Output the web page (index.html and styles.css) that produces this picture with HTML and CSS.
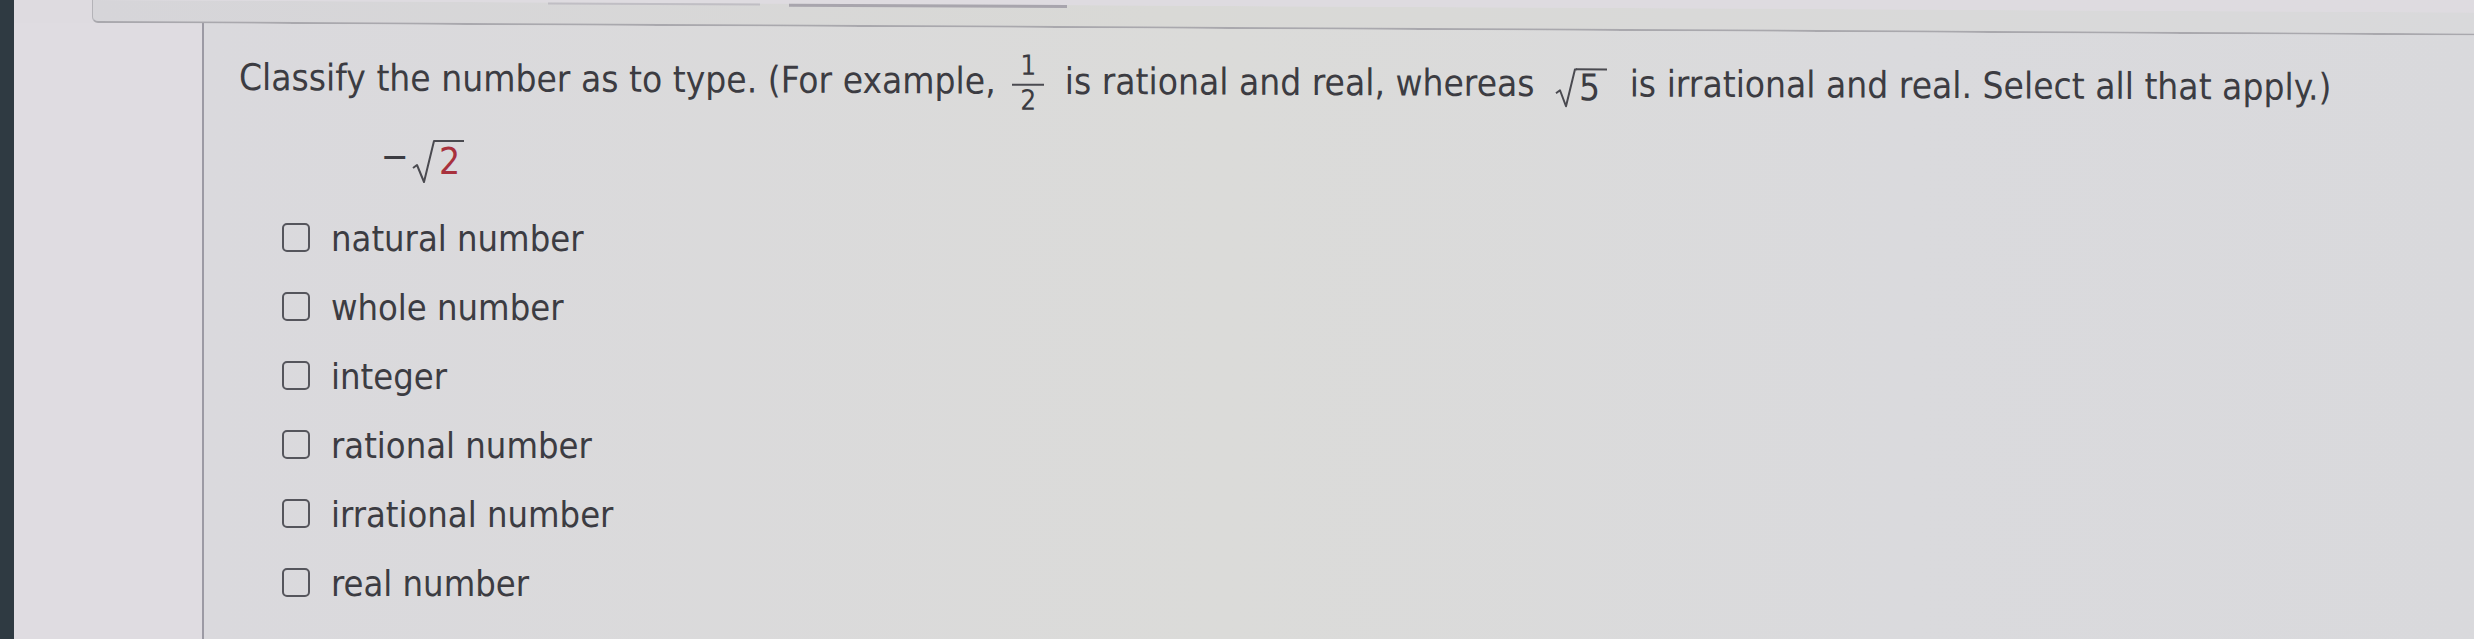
FILE: index.html
```html
<!DOCTYPE html>
<html lang="en">
<head>
<meta charset="utf-8">
<title>Classify the number</title>
<link rel="stylesheet" href="styles.css">
</head>
<body>
<div class="screen">
  <div class="edge"></div>
  <div class="window">
    <div class="topbar">
      <span class="tab tab-a"></span>
      <span class="tab tab-b"></span>
    </div>
    <div class="content">
      <aside class="side"></aside>
      <main class="main">
        <p class="question">Classify the number as to type. (For example, <span class="frac"><span class="num">1</span><span class="bar"></span><span class="den">2</span></span> is rational and real, whereas <span class="sqrt"><svg class="rad" viewBox="0 0 22 40" width="22" height="40"><path d="M1 25 L5 22 L11 38 L20 1 L22 1" fill="none" stroke="#4a4a50" stroke-width="2" stroke-linejoin="round"/></svg><span class="rad-body">5</span></span> is irrational and real. Select all that apply.)</p>
        <p class="expr"><span class="minus">−</span><span class="sqrt sqrt-big"><svg class="rad" viewBox="0 0 24 44" width="24" height="44"><path d="M1 28 L5 25 L12 42 L22 1 L24 1" fill="none" stroke="#4a4a50" stroke-width="2" stroke-linejoin="round"/></svg><span class="rad-body red">2</span></span></p>
        <ul class="options">
          <li class="option"><span class="box"></span><span class="label">natural number</span></li>
          <li class="option"><span class="box"></span><span class="label">whole number</span></li>
          <li class="option"><span class="box"></span><span class="label">integer</span></li>
          <li class="option"><span class="box"></span><span class="label">rational number</span></li>
          <li class="option"><span class="box"></span><span class="label">irrational number</span></li>
          <li class="option"><span class="box"></span><span class="label">real number</span></li>
        </ul>
      </main>
    </div>
  </div>
</div>
</body>
</html>
```
FILE: styles.css
```css
html, body {
  margin: 0;
  padding: 0;
}
body {
  width: 2474px;
  height: 639px;
  overflow: hidden;
  background: #d8d7db;
  font-family: "DejaVu Sans Condensed", "DejaVu Sans", sans-serif;
  font-stretch: condensed;
  color: #3c3c42;
}
.screen {
  display: flex;
  height: 639px;
}
.edge {
  width: 14px;
  flex: none;
  background: #2f3a42;
}
.window {
  flex: 1;
  display: flex;
  flex-direction: column;
  background: #dedbe0;
}
.topbar {
  height: 21px;
  margin-left: 78px;
  border-left: 1px solid #b4b3b8;
  border-bottom: 2px solid #a9a8ad;
  border-bottom-left-radius: 6px;
  background: linear-gradient(90deg, #d6d5d9 0%, #d9d9d6 45%, #d9d9db 100%);
  display: flex;
  align-items: flex-start;
  transform: skewY(0.3deg);
  transform-origin: left top;
}
.tab {
  height: 3px;
  display: block;
}
.tab-a {
  width: 212px;
  height: 2px;
  margin-left: 455px;
  background: #c0bec4;
}
.tab-b {
  width: 278px;
  margin-left: 29px;
  background: #a8a5ad;
}
.content {
  flex: 1;
  display: flex;
}
.side {
  width: 188px;
  flex: none;
  background: #dfdce1;
}
.main {
  flex: 1;
  border-left: 2px solid #9c9aa4;
  background: linear-gradient(90deg, #dad9dd 0%, #dbdbd9 45%, #dadadd 75%, #d9d9dc 100%);
  padding-left: 35px;
}
.question {
  margin: 27px 0 0 0;
  font-size: 36.8px;
  line-height: 46px;
  white-space: nowrap;
  transform: skewY(0.27deg);
  transform-origin: left center;
}
.frac {
  display: inline-flex;
  flex-direction: column;
  align-items: center;
  vertical-align: middle;
  font-size: 28px;
  line-height: 24px;
  margin: 0 10px 0 6px;
}
.frac .bar {
  width: 32px;
  height: 2px;
  margin: 6px 0 3px 0;
  background: #4a4a50;
}
.sqrt {
  display: inline-flex;
  align-items: flex-start;
  vertical-align: -12px;
  margin: 0 12px 0 10px;
}
.rad {
  display: block;
  flex: none;
}
.rad-body {
  border-top: 2px solid #4a4a50;
  line-height: 36px;
  padding: 0 7px 0 3px;
  margin-left: -1px;
}
.expr {
  margin: 26px 0 0 142px;
  font-size: 37px;
  line-height: 44px;
}
.minus {
  margin-right: 3px;
}
.sqrt-big {
  margin: 0;
  vertical-align: -15px;
}
.sqrt-big .rad-body {
  line-height: 40px;
  padding: 0 4px 0 4px;
}
.red {
  color: #a8313d;
}
.options {
  list-style: none;
  margin: 35px 0 0 43px;
  padding: 0;
  display: flex;
  flex-direction: column;
  gap: 29px;
}
.option {
  display: flex;
  align-items: flex-start;
  height: 40px;
}
.box {
  width: 24px;
  height: 25px;
  margin-top: 4px;
  border: 2.5px solid #55555c;
  border-radius: 5px;
  flex: none;
}
.label {
  margin-left: 21px;
  font-size: 36px;
  line-height: 40px;
  white-space: nowrap;
}
```
